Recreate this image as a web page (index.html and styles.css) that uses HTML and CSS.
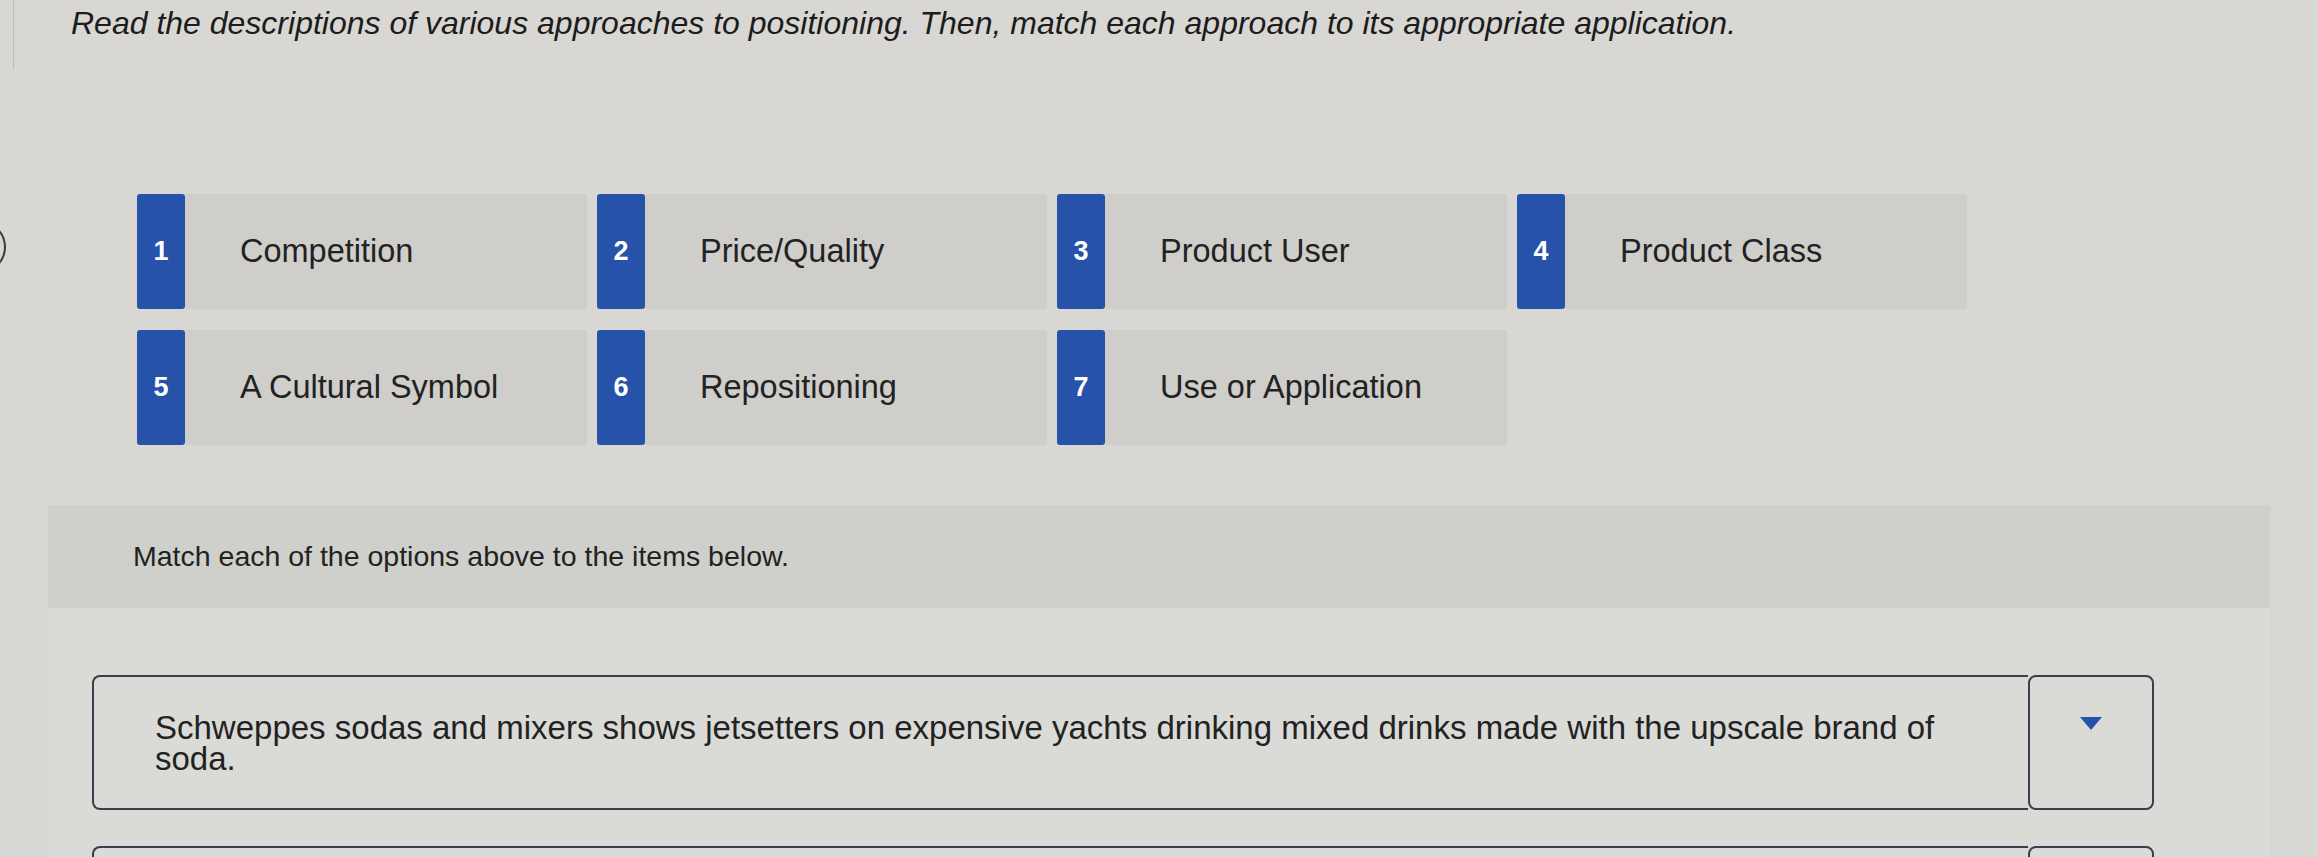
FILE: index.html
```html
<!doctype html>
<html lang="en">
<head>
	<meta charset="UTF-8">
	<title>Positioning approaches</title>
	<link rel="stylesheet" href="styles.css">
</head>
<body>
	<span class="edge-btn"></span>
	<div class="prompt">
		<p>Read the descriptions of various approaches to positioning. Then, match each approach to its appropriate application.</p>
	</div>

	<div class="options">
		<div class="opt"><span class="tag">1</span><span class="label">Competition</span></div>
		<div class="opt"><span class="tag">2</span><span class="label">Price/Quality</span></div>
		<div class="opt"><span class="tag">3</span><span class="label">Product User</span></div>
		<div class="opt"><span class="tag">4</span><span class="label">Product Class</span></div>
		<div class="opt"><span class="tag">5</span><span class="label">A Cultural Symbol</span></div>
		<div class="opt"><span class="tag">6</span><span class="label">Repositioning</span></div>
		<div class="opt"><span class="tag">7</span><span class="label">Use or Application</span></div>
	</div>

	<div class="panel">
		<div class="panel-head">Match each of the options above to the items below.</div>
		<div class="panel-body">
			<div class="answer">
				<div class="answer-text">Schweppes sodas and mixers shows jetsetters on expensive yachts drinking mixed drinks made with the upscale brand of soda.</div>
				<div class="answer-btn"><span class="caret"></span></div>
			</div>
			<div class="answer">
				<div class="answer-text"></div>
				<div class="answer-btn"><span class="caret"></span></div>
			</div>
		</div>
	</div>
</body>
</html>
```
FILE: styles.css
```css
*{
	margin: 0;
	padding: 0;
	box-sizing: border-box;
}
body{
	background-color: #d8d7d3;
	font-family: "Liberation Sans", Arial, sans-serif;
	color: #222;
	height: 857px;
	overflow: hidden;
}
/* half-hidden round button on the far left */
.edge-btn{
	position: absolute;
	left: -40px;
	top: 222px;
	width: 46px;
	height: 50px;
	border: 2px solid #3a3a3a;
	border-radius: 50%;
}
.prompt{
	margin-left: 13px;
	height: 70px;
	border-left: 1px solid #bdbcb8;
	padding: 4px 0 0 57px;
}
.prompt p{
	font-size: 32px;
	font-style: italic;
	line-height: 38px;
	color: #1c1c1c;
}
.options{
	display: grid;
	grid-template-columns: repeat(4, 450px);
	grid-auto-rows: 115px;
	column-gap: 10px;
	row-gap: 21px;
	margin: 124px 0 0 137px;
}
.opt{
	display: flex;
}
.tag{
	width: 48px;
	background-color: #2752aa;
	border-radius: 3px;
	color: #fff;
	font-weight: bold;
	font-size: 27px;
	display: flex;
	align-items: center;
	justify-content: center;
}
.label{
	flex: 1;
	background-color: #cfcecb;
	display: flex;
	align-items: center;
	padding-left: 55px;
	font-size: 32.5px;
}
.panel{
	margin: 60px 0 0 48px;
	width: 2222px;
	background-color: #dadad7;
}
.panel-head{
	height: 103px;
	background-color: #cfcfcc;
	display: flex;
	align-items: center;
	padding-left: 85px;
	font-size: 28.5px;
}
.panel-body{
	padding: 67px 0 0 44px;
	display: flex;
	flex-direction: column;
	gap: 36px;
}
.answer{
	display: flex;
	width: 2062px;
	height: 135px;
}
.answer-text{
	flex: 1;
	border: 2px solid #3b3e4a;
	border-right: none;
	border-radius: 8px 0 0 8px;
	display: flex;
	align-items: center;
	padding: 0 80px 0 61px;
	font-size: 33px;
	line-height: 31px;
}
.answer-btn{
	width: 126px;
	border: 2px solid #3b3e4a;
	border-radius: 8px;
	display: flex;
	justify-content: center;
	padding-top: 40px;
}
.caret{
	width: 0;
	height: 0;
	border-left: 11px solid transparent;
	border-right: 11px solid transparent;
	border-top: 13px solid #2752aa;
}
```
